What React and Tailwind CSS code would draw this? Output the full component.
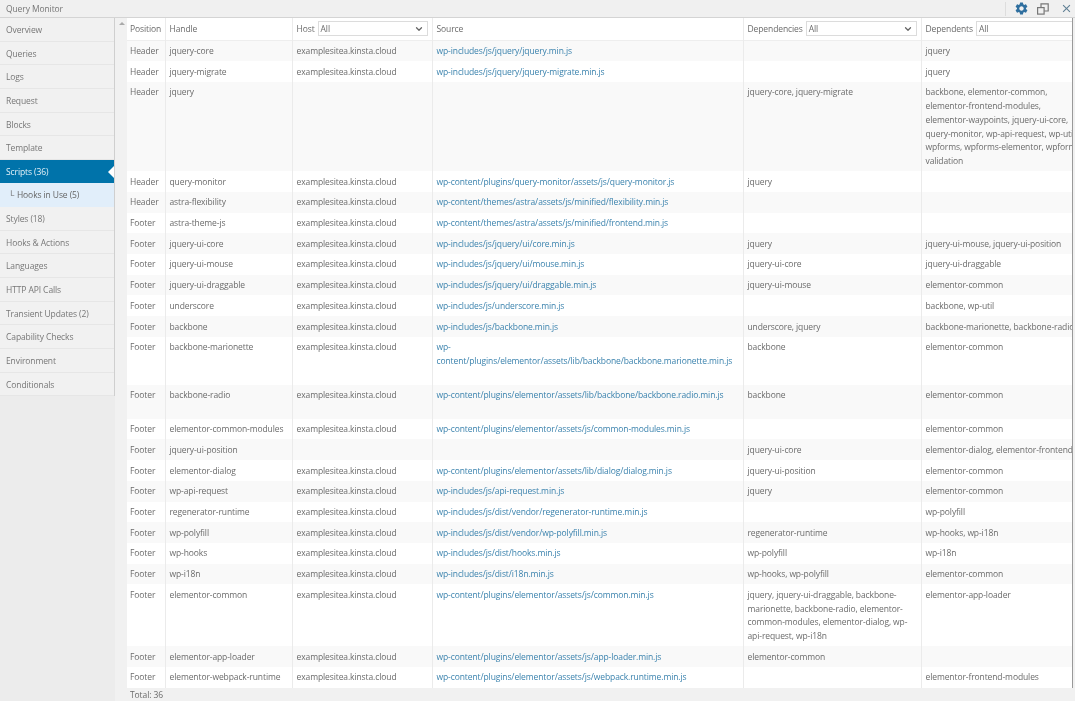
import React from 'react';
import { MdSettings, MdClose } from 'react-icons/md';
import { ChevronDown } from 'lucide-react';

const navItems = [
  'Overview', 'Queries', 'Logs', 'Request', 'Blocks', 'Template', 'Scripts (36)', 'Hooks in Use (5)',
  'Styles (18)', 'Hooks & Actions', 'Languages', 'HTTP API Calls', 'Transient Updates (2)',
  'Capability Checks', 'Environment', 'Conditionals',
];

const host = 'examplesitea.kinsta.cloud';

const rows = [
  ['Header', 'jquery-core', host, 'wp-includes/js/jquery/jquery.min.js', '', 'jquery'],
  ['Header', 'jquery-migrate', host, 'wp-includes/js/jquery/jquery-migrate.min.js', '', 'jquery'],
  ['Header', 'jquery', '', '', 'jquery-core, jquery-migrate', 'backbone, elementor-common, elementor-frontend-modules, elementor-waypoints, jquery-ui-core, query-monitor, wp-api-request, wp-util, wpforms, wpforms-elementor, wpforms-validation'],
  ['Header', 'query-monitor', host, 'wp-content/plugins/query-monitor/assets/js/query-monitor.js', 'jquery', ''],
  ['Header', 'astra-flexibility', host, 'wp-content/themes/astra/assets/js/minified/flexibility.min.js', '', ''],
  ['Footer', 'astra-theme-js', host, 'wp-content/themes/astra/assets/js/minified/frontend.min.js', '', ''],
  ['Footer', 'jquery-ui-core', host, 'wp-includes/js/jquery/ui/core.min.js', 'jquery', 'jquery-ui-mouse, jquery-ui-position'],
  ['Footer', 'jquery-ui-mouse', host, 'wp-includes/js/jquery/ui/mouse.min.js', 'jquery-ui-core', 'jquery-ui-draggable'],
  ['Footer', 'jquery-ui-draggable', host, 'wp-includes/js/jquery/ui/draggable.min.js', 'jquery-ui-mouse', 'elementor-common'],
  ['Footer', 'underscore', host, 'wp-includes/js/underscore.min.js', '', 'backbone, wp-util'],
  ['Footer', 'backbone', host, 'wp-includes/js/backbone.min.js', 'underscore, jquery', 'backbone-marionette, backbone-radio'],
  ['Footer', 'backbone-marionette', host, 'wp-content/plugins/elementor/assets/lib/backbone/backbone.marionette.min.js', 'backbone', 'elementor-common', 'h-[48px]'],
  ['Footer', 'backbone-radio', host, 'wp-content/plugins/elementor/assets/lib/backbone/backbone.radio.min.js', 'backbone', 'elementor-common', 'h-[34px]'],
  ['Footer', 'elementor-common-modules', host, 'wp-content/plugins/elementor/assets/js/common-modules.min.js', '', 'elementor-common'],
  ['Footer', 'jquery-ui-position', '', '', 'jquery-ui-core', 'elementor-dialog, elementor-frontend'],
  ['Footer', 'elementor-dialog', host, 'wp-content/plugins/elementor/assets/lib/dialog/dialog.min.js', 'jquery-ui-position', 'elementor-common'],
  ['Footer', 'wp-api-request', host, 'wp-includes/js/api-request.min.js', 'jquery', 'elementor-common'],
  ['Footer', 'regenerator-runtime', host, 'wp-includes/js/dist/vendor/regenerator-runtime.min.js', '', 'wp-polyfill'],
  ['Footer', 'wp-polyfill', host, 'wp-includes/js/dist/vendor/wp-polyfill.min.js', 'regenerator-runtime', 'wp-hooks, wp-i18n'],
  ['Footer', 'wp-hooks', host, 'wp-includes/js/dist/hooks.min.js', 'wp-polyfill', 'wp-i18n'],
  ['Footer', 'wp-i18n', host, 'wp-includes/js/dist/i18n.min.js', 'wp-hooks, wp-polyfill', 'elementor-common'],
  ['Footer', 'elementor-common', host, 'wp-content/plugins/elementor/assets/js/common.min.js', 'jquery, jquery-ui-draggable, backbone-marionette, backbone-radio, elementor-common-modules, elementor-dialog, wp-api-request, wp-i18n', 'elementor-app-loader'],
  ['Footer', 'elementor-app-loader', host, 'wp-content/plugins/elementor/assets/js/app-loader.min.js', 'elementor-common', ''],
  ['Footer', 'elementor-webpack-runtime', host, 'wp-content/plugins/elementor/assets/js/webpack.runtime.min.js', '', 'elementor-frontend-modules'],
];

const FilterSelect = ({ className }) => (
  <div className={`flex items-center justify-between h-[15px] bg-white border border-[#dcdcdc] px-[2px] ${className}`}>
    <span>All</span>
    <ChevronDown size={10} strokeWidth={3} className="text-[#666] mr-[1px]" />
  </div>
);

const App = () => {
  return (
    <div className="flex flex-col h-[701px] w-[1075px] overflow-hidden bg-[#f1f1f1] text-[#6b6b6b] text-[8.5px] tracking-[-0.1px] leading-[13.7px] font-['Open_Sans',sans-serif] blur-[0.4px]">
      {/* Toolbar */}
      <header className="flex items-center justify-between h-[18px] shrink-0 bg-[#f0f0f0] border-b border-[#d4d4d4] pl-[6px]">
        <span className="text-[#777]">Query Monitor</span>
        <div className="flex items-center h-full">
          <div className="w-px h-[14px] bg-[#ddd] mr-[8px]" />
          <MdSettings size={15} className="text-[#2f6f9f] mr-[8px]" />
          <svg width="12" height="12" viewBox="0 0 12 12" fill="none" stroke="#777" strokeWidth="1.2" className="mr-[11px]">
            <rect x="0.6" y="4.6" width="6.5" height="6.5" />
            <path d="M4 4.5V0.8h7.2V8H7.2" />
          </svg>
          <MdClose size={13} className="text-[#5f7f94] mr-[2px]" />
        </div>
      </header>

      <div className="flex flex-1 min-h-0">
        {/* Sidebar */}
        <nav className="w-[115px] shrink-0 bg-[#ececec]">
          <ul className="border-r border-[#cfcfcf] bg-[#f1f1f1]">
            {navItems.map((item) => {
              const active = item === 'Scripts (36)';
              const sub = item === 'Hooks in Use (5)';
              return (
                <li
                  key={item}
                  className={`relative flex items-center h-[23.65px] pt-[1px] pl-[6px] border-b ${
                    active
                      ? 'bg-[#0073aa] text-[#e6f2f8] border-[#0073aa]'
                      : sub
                      ? 'bg-[#e1eefa] text-[#666] border-[#e1eefa] pl-[8px]'
                      : 'text-[#777] border-[#e6e6e6]'
                  }`}
                >
                  {sub ? <span className="mr-[3px]">└</span> : null}
                  {item}
                  {active ? (
                    <span className="absolute right-0 top-[6px] border-y-[6px] border-r-[6px] border-y-transparent border-r-white" />
                  ) : null}
                </li>
              );
            })}
          </ul>
        </nav>

        {/* Sort gutter */}
        <div className="w-[12px] shrink-0 flex justify-center pt-[4px] pl-[2px]">
          <span className="w-0 h-0 border-x-[3px] border-b-[3px] border-x-transparent border-b-[#aaa]" />
        </div>

        {/* Table */}
        <div className="flex-1 min-w-0 overflow-hidden">
          <div className="w-[946px] overflow-hidden border-r border-[#999]">
            <table className="w-[962px] table-fixed border-collapse">
              <colgroup>
                <col className="w-[38px]" />
                <col className="w-[127px]" />
                <col className="w-[140px]" />
                <col className="w-[311px]" />
                <col className="w-[178px]" />
                <col className="w-[168px]" />
              </colgroup>
              <thead>
                <tr className="h-[22px] bg-white border-b border-[#eee] text-left font-normal">
                  <th className="font-normal px-[3px] border-r border-[#ebebeb]">Position</th>
                  <th className="font-normal px-[4px] border-r border-[#ebebeb]">Handle</th>
                  <th className="font-normal px-[4px] border-r border-[#ebebeb]">
                    <div className="flex items-center gap-[3px]">Host <FilterSelect className="w-[111px]" /></div>
                  </th>
                  <th className="font-normal px-[4px] border-r border-[#ebebeb]">Source</th>
                  <th className="font-normal px-[4px] border-r border-[#ebebeb]">
                    <div className="flex items-center gap-[3px]">Dependencies <FilterSelect className="w-[111px]" /></div>
                  </th>
                  <th className="font-normal px-[4px]">
                    <div className="flex items-center gap-[3px]">Dependents <FilterSelect className="w-[110px]" /></div>
                  </th>
                </tr>
              </thead>
              <tbody>
                {rows.map((row, i) => (
                  <tr key={row[1]} className={`align-top ${i % 2 === 0 ? 'bg-[#f9f9f9]' : 'bg-white'} ${row[6] || ''}`}>
                    <td className="px-[3px] py-[3.5px] border-r border-[#ebebeb]">{row[0]}</td>
                    <td className="px-[4px] py-[3.5px] border-r border-[#ebebeb]">{row[1]}</td>
                    <td className="px-[4px] py-[3.5px] border-r border-[#ebebeb]">{row[2]}</td>
                    <td className="px-[4px] py-[3.5px] border-r border-[#ebebeb] text-[#3a82ad]">{row[3]}</td>
                    <td className="px-[4px] py-[3.5px] border-r border-[#ebebeb]">{row[4]}</td>
                    <td className="px-[4px] py-[3.5px]">{row[5]}</td>
                  </tr>
                ))}
              </tbody>
            </table>
          </div>
          <div className="pl-[3px]">Total: 36</div>
        </div>
      </div>
    </div>
  );
};

export default App;
